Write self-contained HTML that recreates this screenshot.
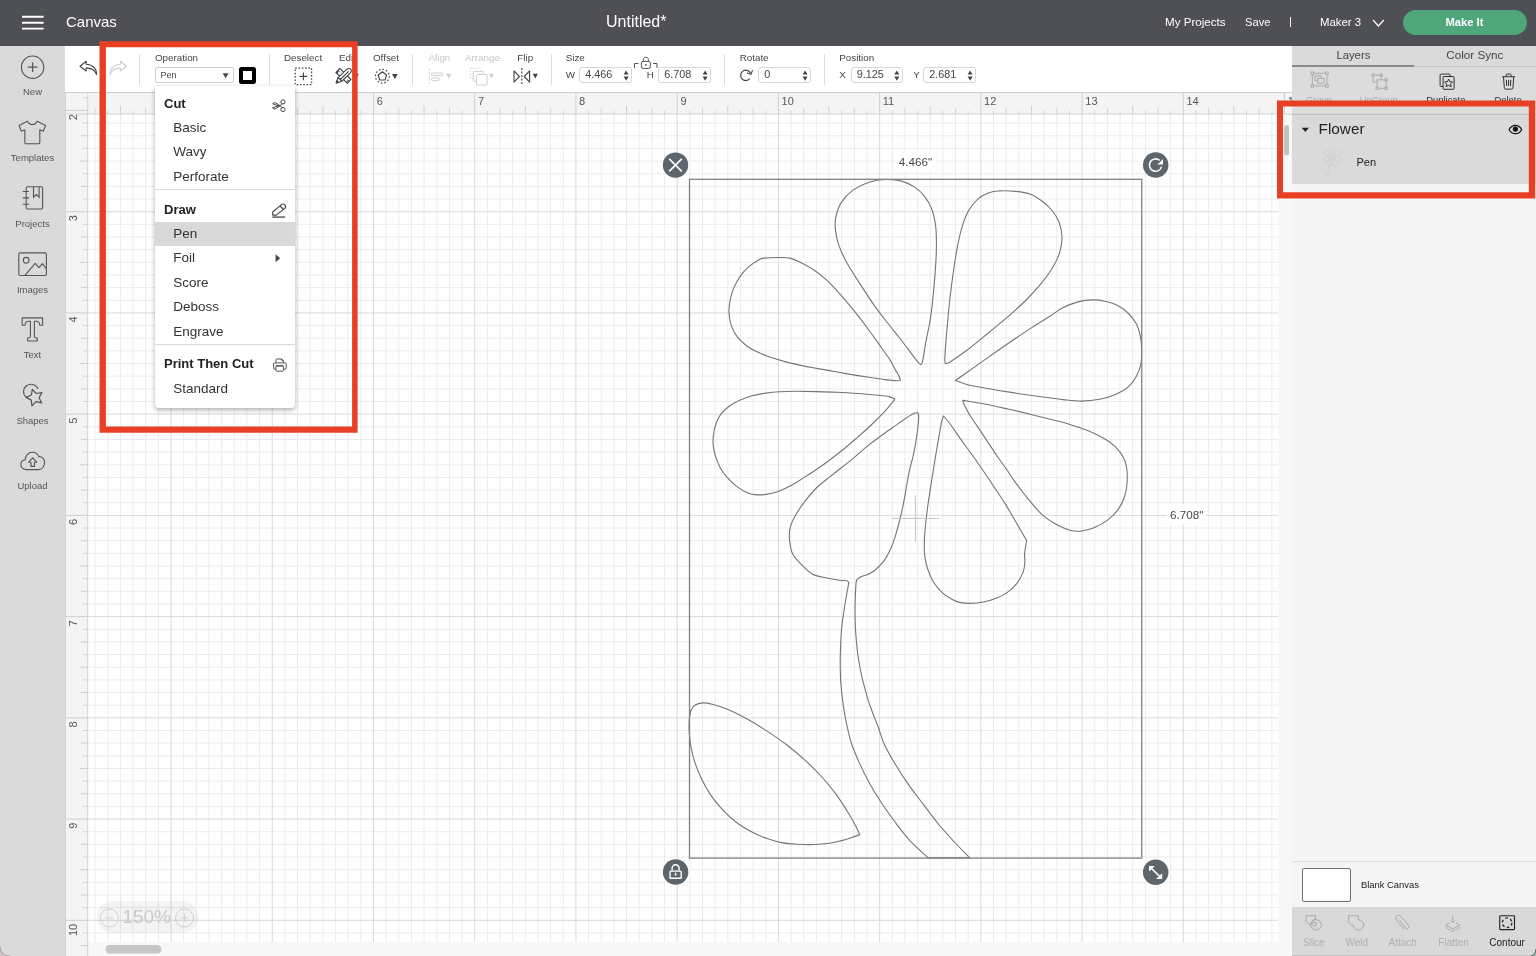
<!DOCTYPE html>
<html><head><meta charset="utf-8"><title>Canvas</title>
<style>
*{box-sizing:border-box;margin:0;padding:0}
html,body{width:1536px;height:956px;overflow:hidden;background:#fff;position:relative;font-family:"Liberation Sans",sans-serif;color:#333}
#topbar{position:absolute;left:0;top:0;width:1536px;height:45.7px;background:#4f5055;color:#fff;z-index:7}
#sidebar{position:absolute;left:0;top:45px;width:65.3px;height:911px;background:#dadada;z-index:5}
#toolbar{position:absolute;left:65px;top:45px;width:1228px;height:48px;background:#fff;border-bottom:1px solid #cdcdcd;z-index:4}
#cv{position:absolute;left:0;top:0;width:1536px;height:956px;z-index:1}
#rpanel{position:absolute;left:1292px;top:45px;width:244px;height:911px;background:#f5f5f5;z-index:5}
.t{position:absolute;white-space:nowrap;line-height:1}
.sb-l{position:absolute;left:0;width:65px;text-align:center;font-size:9.5px;color:#555;line-height:10px}
.ic{position:absolute;overflow:visible}
.tl{position:absolute;font-size:9.8px;color:#444;line-height:10px;white-space:nowrap}
.tl.dis{color:#c6c6c6}
.sep{position:absolute;top:9px;width:1px;height:31px;background:#dedede}
.inp{position:absolute;top:22.4px;height:16px;border:1px solid #d6d6d6;border-radius:3px;background:#fff;font-size:10.8px;color:#444;line-height:13.6px;padding-left:5px}
.spin{position:absolute;width:6px;height:11px;overflow:visible}
#menu{position:absolute;left:154.5px;top:85.5px;width:140.5px;height:322.5px;background:#fff;border-radius:0 0 4px 4px;box-shadow:0 2px 5px rgba(0,0,0,.32);z-index:6}
.mi{position:absolute;left:18.8px;font-size:13.5px;color:#333;line-height:14px;white-space:nowrap}
.mh{position:absolute;left:9.5px;font-size:13px;font-weight:bold;color:#222;line-height:14px;white-space:nowrap}
.md{position:absolute;left:0;width:100%;height:1px;background:#d8d8d8}
.red{position:absolute;border:5.8px solid #e83f25;z-index:9}
body{will-change:transform}
</style></head><body>
<div id="topbar">
<svg class="ic" style="left:22px;top:15px" width="22" height="14"><g transform="translate(0 0.6)"><path d="M0 1.2H21.6M0 7.1H21.6M0 13H21.6" stroke="#fff" stroke-width="1.9" fill="none"/></g></svg>
<div class="t" style="left:66px;top:14px;font-size:15px">Canvas</div>
<div class="t" style="left:606px;top:14.4px;font-size:16px">Untitled*</div>
<div class="t" style="left:1165px;top:16px;font-size:11.6px">My Projects</div>
<div class="t" style="left:1245px;top:16.8px;font-size:11.2px">Save</div>
<div class="t" style="left:1289px;top:16px;font-size:11.5px">|</div>
<div class="t" style="left:1320px;top:16.8px;font-size:11.4px">Maker 3</div>
<svg class="ic" style="left:1372px;top:19px" width="13" height="9"><path d="M1 1L6.4 7L11.8 1" stroke="#fff" stroke-width="1.2" fill="none"/></svg>
<div style="position:absolute;left:1403px;top:10px;width:123.5px;height:24.6px;border-radius:13px;background:#4fa67b"></div>
<div class="t" style="left:1445.5px;top:16.5px;font-size:11.2px;font-weight:bold">Make It</div>
</div>
<div id="sidebar">
<!-- New -->
<svg class="ic" style="left:20px;top:10px" width="25" height="25" fill="none" stroke="#555" stroke-width="1.1"><circle cx="12.6" cy="12.2" r="11.2"/><path d="M12.6 7.4V17M7.8 12.2H17.4" stroke-width="1.3"/></svg>
<div class="sb-l" style="top:42px">New</div>
<!-- Templates -->
<svg class="ic" style="left:18px;top:75px" width="29" height="25" fill="none" stroke="#555" stroke-width="1.1" stroke-linejoin="round"><path d="M9.5 1.3C10.5 3.6 12.3 4.6 14.3 4.6C16.3 4.6 18.1 3.6 19.1 1.3L27.6 5.5L25.2 11.2L21.8 9.8V22.3C21.8 23.2 21.2 23.7 20.4 23.7H8.2C7.4 23.7 6.8 23.2 6.8 22.3V9.8L3.4 11.2L1 5.5Z"/></svg>
<div class="sb-l" style="top:108px">Templates</div>
<!-- Projects -->
<svg class="ic" style="left:22px;top:141px" width="22" height="24" fill="none" stroke="#555" stroke-width="1.1"><rect x="4.2" y="0.8" width="16.4" height="22.2" rx="1.2"/><path d="M0.8 5.5H7M0.8 11.9H7M0.8 18.3H7"/><path d="M11.5 1V11.2L14.3 8.6L17.1 11.2V1"/></svg>
<div class="sb-l" style="top:173.5px">Projects</div>
<!-- Images -->
<svg class="ic" style="left:18px;top:207px" width="30" height="25" fill="none" stroke="#555" stroke-width="1.1" stroke-linejoin="round"><rect x="0.8" y="0.9" width="27.6" height="22.6" rx="1.4"/><circle cx="8.2" cy="8.3" r="2.9"/><path d="M7.2 23.2L17.2 11.3L21 15.6L24.4 11.6L28.2 16.6"/></svg>
<div class="sb-l" style="top:239.5px">Images</div>
<!-- Text -->
<svg class="ic" style="left:21px;top:272px" width="23" height="25" fill="none" stroke="#555" stroke-width="1.1" stroke-linejoin="round"><path d="M1.2 0.9H21.6V8.2H18.8C18.6 5.6 17.6 4.3 15 4.3H13.4V19.5C13.4 20.6 14 21 15.2 21H16.2V24H6.6V21H7.6C8.8 21 9.4 20.6 9.4 19.5V4.3H7.8C5.2 4.3 4.2 5.6 4 8.2H1.2Z"/></svg>
<div class="sb-l" style="top:304.5px">Text</div>
<!-- Shapes -->
<svg class="ic" style="left:22px;top:338px" width="22" height="24" fill="none" stroke="#555" stroke-width="1.1" stroke-linejoin="round"><path d="M16.0 5.9A7.5 7.5 0 1 0 4.4 14.6"/><path d="M10.3 6.3L14.2 10.5L19.9 9.6L17.1 14.7L19.7 19.9L14.0 18.7L9.9 22.8L9.3 17.1L4.1 14.4L9.4 12.0Z" fill="#dadada" stroke-width="1.2"/></svg>
<div class="sb-l" style="top:370.5px">Shapes</div>
<!-- Upload -->
<svg class="ic" style="left:20px;top:406px" width="26" height="20" fill="none" stroke="#555" stroke-width="1.1" stroke-linejoin="round"><path d="M6.4 18.6C3.2 18.6 0.9 16.4 0.9 13.6C0.9 11 2.8 9 5.2 8.7C5.4 4.5 8.4 1.2 12.4 1.2C15.4 1.2 17.8 2.9 18.8 5.6C22 5.4 24.6 8 24.6 11.6C24.6 15.4 22 18.6 18.8 18.6Z"/><path d="M11 15.4V11.2H8.6L12.7 6.8L16.8 11.2H14.4V15.4Z"/></svg>
<div class="sb-l" style="top:436px">Upload</div>
</div>
<div id="toolbar">
<!-- undo / redo -->
<svg class="ic" style="left:14px;top:15px" width="19" height="16" fill="none" stroke="#444" stroke-width="1.1" stroke-linejoin="round"><path d="M7.2 1.2L1 6.2L7.2 11V7.9C12 7.9 15.6 9.8 17.6 14.6C17.6 8.6 13.6 4.4 7.2 4.2Z"/></svg>
<svg class="ic" style="left:44px;top:15px" width="19" height="16" fill="none" stroke="#cfcfcf" stroke-width="1.1" stroke-linejoin="round"><path d="M11.4 1.2L17.6 6.2L11.4 11V7.9C6.6 7.9 3 9.8 1 14.6C1 8.6 5 4.4 11.4 4.2Z"/></svg>
<div class="sep" style="left:74.3px"></div>
<!-- operation -->
<div class="tl" style="left:90px;top:7.6px">Operation</div>
<div style="position:absolute;left:90px;top:22px;width:79px;height:16.2px;border:1px solid #cfcfcf;border-radius:2px;background:#fff"></div>
<div class="t" style="left:95.5px;top:25.2px;font-size:9px;color:#444;line-height:10px">Pen</div>
<svg class="ic" style="left:157px;top:28px" width="7" height="6"><g transform="translate(0.5 0)"><path d="M0.2 0.2H6L3.1 5.2Z" fill="#444"/></g></svg>
<div style="position:absolute;left:174px;top:21.7px;width:17px;height:17px;border:4px solid #000;border-radius:2.5px;background:#fff"></div>
<div class="sep" style="left:203.8px"></div>
<!-- deselect -->
<div class="tl" style="left:219px;top:7.6px">Deselect</div>
<svg class="ic" style="left:229px;top:22px" width="19" height="19" fill="none" stroke="#444"><rect x="1.2" y="1.2" width="16.4" height="16.4" stroke-width="1.2" stroke-dasharray="1.6 1.7"/><path d="M9.4 5.6V13.2M5.6 9.4H13.2" stroke-width="1.1"/></svg>
<!-- edit -->
<div class="tl" style="left:274px;top:7.6px">Edit</div>
<svg class="ic" style="left:270px;top:23px" width="17" height="17" fill="none" stroke="#444" stroke-width="1.1" stroke-linejoin="round"><path d="M4.8 0.4L0.9 4.5L12.4 15.4L16 11.5Z"/><path d="M3 2.6L4.6 4.2M1.9 3.7L3 4.8M12.6 11.6L14.2 13.2M11.6 12.8L12.7 13.9"/><path d="M11.9 1.2Q14.6 -0.4 15.9 1.4Q17.2 3 15.7 4.6L6.6 13.5L1.2 14.9L2.8 9.9Z" fill="#fff"/><path d="M13.7 3.3L4.8 12M2.8 9.9Q5.4 10.6 6.6 13.5"/><path d="M1.2 14.9L1.9 12.6L3.5 14.3Z" fill="#444"/></svg>
<svg class="ic" style="left:288px;top:28px" width="6" height="6"><g transform="translate(0.5 0.6)"><path d="M0.2 0.2H5.4L2.8 4.8Z" fill="#444"/></g></svg>
<!-- offset -->
<div class="tl" style="left:308px;top:7.6px">Offset</div>
<svg class="ic" style="left:309px;top:23px" width="16" height="16" fill="none" stroke="#444"><g transform="translate(0.6 0.4)"><circle cx="7.8" cy="7.8" r="6.9" stroke-width="1.2" stroke-dasharray="1.6 2"/><path d="M7.8 3.4L12 6.6L10.4 11.6H5.2L3.6 6.6Z" stroke-width="1.1" stroke-linejoin="round"/></g></svg>
<svg class="ic" style="left:326px;top:28px" width="7" height="6"><g transform="translate(0.8 0.8)"><path d="M0.2 0.2H6L3.1 5.2Z" fill="#444"/></g></svg>
<div class="sep" style="left:346.8px"></div>
<!-- align -->
<div class="tl dis" style="left:363.5px;top:7.6px">Align</div>
<svg class="ic" style="left:363px;top:23px" width="17" height="18" fill="none" stroke="#cfcfcf" stroke-width="1"><path d="M1.4 0.5V17" stroke-dasharray="2 1.4"/><rect x="3.4" y="5" width="11.4" height="2.6" rx="1.3"/><rect x="3.4" y="10" width="8" height="2.6" rx="1.3"/></svg>
<svg class="ic" style="left:381px;top:28px" width="6" height="6"><g transform="translate(0 0.6)"><path d="M0.2 0.2H5.4L2.8 4.8Z" fill="#cfcfcf"/></g></svg>
<!-- arrange -->
<div class="tl dis" style="left:400px;top:7.6px">Arrange</div>
<svg class="ic" style="left:404px;top:22px" width="19" height="19" fill="none" stroke="#cfcfcf" stroke-width="1"><g transform="translate(0.5 0.5)"><rect x="0.8" y="0.8" width="10" height="10" rx="1" stroke-dasharray="1.4 1.4"/><rect x="3.8" y="3.8" width="10" height="10" rx="1" fill="#fff"/><rect x="7" y="7" width="10.6" height="10.6" rx="1" fill="#fff"/></g></svg>
<svg class="ic" style="left:423px;top:28px" width="6" height="6"><g transform="translate(0.7 0.6)"><path d="M0.2 0.2H5.4L2.8 4.8Z" fill="#cfcfcf"/></g></svg>
<!-- flip -->
<div class="tl" style="left:452.3px;top:7.6px">Flip</div>
<svg class="ic" style="left:448px;top:22px" width="18" height="18" fill="none" stroke="#444" stroke-width="1.1" stroke-linejoin="round"><g transform="translate(0 0.5)"><path d="M8.8 0.4V17.6" stroke-dasharray="2 1.5"/><path d="M1 3.4L6.4 9L1 14.6Z"/><path d="M16.6 3.4L11.2 9L16.6 14.6Z"/></g></svg>
<svg class="ic" style="left:467px;top:28px" width="6" height="6"><g transform="translate(0.5 0.6)"><path d="M0.2 0.2H5.4L2.8 4.8Z" fill="#444"/></g></svg>
<div class="sep" style="left:486px"></div>
<!-- size -->
<div class="tl" style="left:500.7px;top:7.6px">Size</div>
<div class="tl" style="left:500.7px;top:24.6px;font-size:9.8px">W</div>
<div class="inp" style="left:514.3px;width:53px">4.466</div>
<svg class="spin" style="left:558px;top:25px"><g transform="translate(0.3 0.2)"><path d="M0.3 4.4H5.3L2.8 0.2ZM0.3 6.4H5.3L2.8 10.6Z" fill="#444"/></g></svg>
<svg class="ic" style="left:569px;top:11px" width="24" height="14" fill="none" stroke="#555" stroke-width="1"><path d="M0.5 12V7.5H4.5M23 12V7.5H19"/><rect x="7.4" y="5.4" width="9" height="7" rx="1.6" fill="#fff"/><path d="M9.4 5.4V3.6C9.4 0.4 14.4 0.4 14.4 3.6V5.4"/><circle cx="11.9" cy="8.9" r="0.9" fill="#555" stroke="none"/></svg>
<div class="tl" style="left:581.7px;top:24.6px;font-size:9.8px">H</div>
<div class="inp" style="left:593.3px;width:53px">6.708</div>
<svg class="spin" style="left:637px;top:25px"><g transform="translate(0.3 0.2)"><path d="M0.3 4.4H5.3L2.8 0.2ZM0.3 6.4H5.3L2.8 10.6Z" fill="#444"/></g></svg>
<div class="sep" style="left:659.3px"></div>
<!-- rotate -->
<div class="tl" style="left:674.7px;top:7.6px">Rotate</div>
<svg class="ic" style="left:674px;top:23px" width="15" height="14" fill="none" stroke="#444" stroke-width="1.2"><g transform="translate(0 0.5)"><path d="M10.8 10.2A5.2 5.2 0 1 1 11.4 4.4"/><path d="M8.2 4.8H13.4V0" stroke="none" fill="none"/><path d="M13.6 1.6L12 5.8L8 4.4" stroke-linejoin="round" stroke-width="1.1"/></g></svg>
<div class="inp" style="left:693.3px;width:53px">0</div>
<svg class="spin" style="left:737px;top:25px"><g transform="translate(0.3 0.2)"><path d="M0.3 4.4H5.3L2.8 0.2ZM0.3 6.4H5.3L2.8 10.6Z" fill="#444"/></g></svg>
<div class="sep" style="left:759.3px"></div>
<!-- position -->
<div class="tl" style="left:774.3px;top:7.6px">Position</div>
<div class="tl" style="left:774.3px;top:24.6px;font-size:9.8px">X</div>
<div class="inp" style="left:785.7px;width:52.5px">9.125</div>
<svg class="spin" style="left:829px;top:25px"><g transform="translate(0 0.2)"><path d="M0.3 4.4H5.3L2.8 0.2ZM0.3 6.4H5.3L2.8 10.6Z" fill="#444"/></g></svg>
<div class="tl" style="left:848.3px;top:24.6px;font-size:9.8px">Y</div>
<div class="inp" style="left:858.3px;width:53px">2.681</div>
<svg class="spin" style="left:902px;top:25px"><g transform="translate(0.3 0.2)"><path d="M0.3 4.4H5.3L2.8 0.2ZM0.3 6.4H5.3L2.8 10.6Z" fill="#444"/></g></svg>
</div>
<svg id="cv" width="1536" height="956" viewBox="0 0 1536 956" style="font-family:'Liberation Sans',sans-serif">
<rect x="65" y="93" width="1228" height="863" fill="#fff"/>
<path d="M95.10 114V942M107.75 114V942M120.41 114V942M133.06 114V942M145.71 114V942M158.37 114V942M183.67 114V942M196.33 114V942M208.98 114V942M221.64 114V942M234.29 114V942M246.94 114V942M259.60 114V942M284.90 114V942M297.56 114V942M310.21 114V942M322.87 114V942M335.52 114V942M348.17 114V942M360.83 114V942M386.13 114V942M398.79 114V942M411.44 114V942M424.10 114V942M436.75 114V942M449.40 114V942M462.06 114V942M487.36 114V942M500.02 114V942M512.67 114V942M525.33 114V942M537.98 114V942M550.63 114V942M563.29 114V942M588.59 114V942M601.25 114V942M613.90 114V942M626.56 114V942M639.21 114V942M651.86 114V942M664.52 114V942M689.82 114V942M702.48 114V942M715.13 114V942M727.79 114V942M740.44 114V942M753.09 114V942M765.75 114V942M791.05 114V942M803.71 114V942M816.36 114V942M829.01 114V942M841.67 114V942M854.32 114V942M866.98 114V942M892.28 114V942M904.94 114V942M917.59 114V942M930.25 114V942M942.90 114V942M955.55 114V942M968.21 114V942M993.51 114V942M1006.17 114V942M1018.82 114V942M1031.47 114V942M1044.13 114V942M1056.78 114V942M1069.44 114V942M1094.74 114V942M1107.40 114V942M1120.05 114V942M1132.70 114V942M1145.36 114V942M1158.01 114V942M1170.67 114V942M1195.97 114V942M1208.63 114V942M1221.28 114V942M1233.93 114V942M1246.59 114V942M1259.24 114V942M1271.90 114V942M88 123.11H1278.5M88 135.77H1278.5M88 148.42H1278.5M88 161.08H1278.5M88 173.73H1278.5M88 186.38H1278.5M88 199.04H1278.5M88 224.34H1278.5M88 237.00H1278.5M88 249.65H1278.5M88 262.31H1278.5M88 274.96H1278.5M88 287.61H1278.5M88 300.27H1278.5M88 325.57H1278.5M88 338.23H1278.5M88 350.88H1278.5M88 363.54H1278.5M88 376.19H1278.5M88 388.84H1278.5M88 401.50H1278.5M88 426.80H1278.5M88 439.46H1278.5M88 452.11H1278.5M88 464.76H1278.5M88 477.42H1278.5M88 490.07H1278.5M88 502.73H1278.5M88 528.03H1278.5M88 540.69H1278.5M88 553.34H1278.5M88 566.00H1278.5M88 578.65H1278.5M88 591.30H1278.5M88 603.96H1278.5M88 629.26H1278.5M88 641.92H1278.5M88 654.57H1278.5M88 667.23H1278.5M88 679.88H1278.5M88 692.53H1278.5M88 705.19H1278.5M88 730.49H1278.5M88 743.15H1278.5M88 755.80H1278.5M88 768.46H1278.5M88 781.11H1278.5M88 793.76H1278.5M88 806.42H1278.5M88 831.72H1278.5M88 844.38H1278.5M88 857.03H1278.5M88 869.69H1278.5M88 882.34H1278.5M88 894.99H1278.5M88 907.65H1278.5M88 932.95H1278.5" stroke="#ececec" stroke-width="1" fill="none"/>
<path d="M171.02 114V942M272.25 114V942M373.48 114V942M474.71 114V942M575.94 114V942M677.17 114V942M778.40 114V942M879.63 114V942M980.86 114V942M1082.09 114V942M1183.32 114V942M88 211.69H1278.5M88 312.92H1278.5M88 414.15H1278.5M88 515.38H1278.5M88 616.61H1278.5M88 717.84H1278.5M88 819.07H1278.5M88 920.30H1278.5" stroke="#dadada" stroke-width="1" fill="none"/>
<rect x="1278.5" y="114" width="14" height="842" fill="#f7f7f7"/>
<rect x="88" y="942" width="1205" height="14" fill="#f7f7f7"/>
<rect x="105.5" y="945" width="56" height="8.6" rx="4.3" fill="#c6c6c6"/>
<rect x="1284" y="125" width="5" height="30.5" rx="2.5" fill="#c2c2c2"/>
<rect x="65" y="93" width="1228" height="21" fill="#f4f4f4"/>
<rect x="65" y="93" width="23" height="863" fill="#f4f4f4"/>
<path d="M65.5 93V956M87.7 93V956M65 114H1293" stroke="#d4d4d4" stroke-width="1" fill="none"/>
<path d="M95.10 108.50V114M107.75 111.00V114M120.41 106.00V114M133.06 111.00V114M145.71 108.50V114M158.37 111.00V114M171.02 93.00V114M183.67 111.00V114M196.33 108.50V114M208.98 111.00V114M221.64 106.00V114M234.29 111.00V114M246.94 108.50V114M259.60 111.00V114M272.25 93.00V114M284.90 111.00V114M297.56 108.50V114M310.21 111.00V114M322.87 106.00V114M335.52 111.00V114M348.17 108.50V114M360.83 111.00V114M373.48 93.00V114M386.13 111.00V114M398.79 108.50V114M411.44 111.00V114M424.10 106.00V114M436.75 111.00V114M449.40 108.50V114M462.06 111.00V114M474.71 93.00V114M487.36 111.00V114M500.02 108.50V114M512.67 111.00V114M525.33 106.00V114M537.98 111.00V114M550.63 108.50V114M563.29 111.00V114M575.94 93.00V114M588.59 111.00V114M601.25 108.50V114M613.90 111.00V114M626.56 106.00V114M639.21 111.00V114M651.86 108.50V114M664.52 111.00V114M677.17 93.00V114M689.82 111.00V114M702.48 108.50V114M715.13 111.00V114M727.79 106.00V114M740.44 111.00V114M753.09 108.50V114M765.75 111.00V114M778.40 93.00V114M791.05 111.00V114M803.71 108.50V114M816.36 111.00V114M829.01 106.00V114M841.67 111.00V114M854.32 108.50V114M866.98 111.00V114M879.63 93.00V114M892.28 111.00V114M904.94 108.50V114M917.59 111.00V114M930.25 106.00V114M942.90 111.00V114M955.55 108.50V114M968.21 111.00V114M980.86 93.00V114M993.51 111.00V114M1006.17 108.50V114M1018.82 111.00V114M1031.47 106.00V114M1044.13 111.00V114M1056.78 108.50V114M1069.44 111.00V114M1082.09 93.00V114M1094.74 111.00V114M1107.40 108.50V114M1120.05 111.00V114M1132.70 106.00V114M1145.36 111.00V114M1158.01 108.50V114M1170.67 111.00V114M1183.32 93.00V114M1195.97 111.00V114M1208.63 108.50V114M1221.28 111.00V114M1233.93 106.00V114M1246.59 111.00V114M1259.24 108.50V114M1271.90 111.00V114M1284.55 93.00V114M83.20 97.81H87.7M65.70 110.46H87.7M83.20 123.11H87.7M81.20 135.77H87.7M83.20 148.42H87.7M79.70 161.08H87.7M83.20 173.73H87.7M81.20 186.38H87.7M83.20 199.04H87.7M65.70 211.69H87.7M83.20 224.34H87.7M81.20 237.00H87.7M83.20 249.65H87.7M79.70 262.31H87.7M83.20 274.96H87.7M81.20 287.61H87.7M83.20 300.27H87.7M65.70 312.92H87.7M83.20 325.57H87.7M81.20 338.23H87.7M83.20 350.88H87.7M79.70 363.54H87.7M83.20 376.19H87.7M81.20 388.84H87.7M83.20 401.50H87.7M65.70 414.15H87.7M83.20 426.80H87.7M81.20 439.46H87.7M83.20 452.11H87.7M79.70 464.76H87.7M83.20 477.42H87.7M81.20 490.07H87.7M83.20 502.73H87.7M65.70 515.38H87.7M83.20 528.03H87.7M81.20 540.69H87.7M83.20 553.34H87.7M79.70 566.00H87.7M83.20 578.65H87.7M81.20 591.30H87.7M83.20 603.96H87.7M65.70 616.61H87.7M83.20 629.26H87.7M81.20 641.92H87.7M83.20 654.57H87.7M79.70 667.23H87.7M83.20 679.88H87.7M81.20 692.53H87.7M83.20 705.19H87.7M65.70 717.84H87.7M83.20 730.49H87.7M81.20 743.15H87.7M83.20 755.80H87.7M79.70 768.46H87.7M83.20 781.11H87.7M81.20 793.76H87.7M83.20 806.42H87.7M65.70 819.07H87.7M83.20 831.72H87.7M81.20 844.38H87.7M83.20 857.03H87.7M79.70 869.69H87.7M83.20 882.34H87.7M81.20 894.99H87.7M83.20 907.65H87.7M65.70 920.30H87.7M83.20 932.95H87.7M81.20 945.61H87.7" stroke="#cfcfcf" stroke-width="1" fill="none"/>
<text x="174.2" y="105" font-size="11" fill="#555">4</text>
<text x="275.4" y="105" font-size="11" fill="#555">5</text>
<text x="376.7" y="105" font-size="11" fill="#555">6</text>
<text x="477.9" y="105" font-size="11" fill="#555">7</text>
<text x="579.1" y="105" font-size="11" fill="#555">8</text>
<text x="680.4" y="105" font-size="11" fill="#555">9</text>
<text x="781.6" y="105" font-size="11" fill="#555">10</text>
<text x="882.8" y="105" font-size="11" fill="#555">11</text>
<text x="984.1" y="105" font-size="11" fill="#555">12</text>
<text x="1085.3" y="105" font-size="11" fill="#555">13</text>
<text x="1186.5" y="105" font-size="11" fill="#555">14</text>
<text x="1287.8" y="105" font-size="11" fill="#555">15</text>
<text transform="translate(77 114.0) rotate(-90)" font-size="11" fill="#555" text-anchor="end">2</text>
<text transform="translate(77 215.2) rotate(-90)" font-size="11" fill="#555" text-anchor="end">3</text>
<text transform="translate(77 316.4) rotate(-90)" font-size="11" fill="#555" text-anchor="end">4</text>
<text transform="translate(77 417.7) rotate(-90)" font-size="11" fill="#555" text-anchor="end">5</text>
<text transform="translate(77 518.9) rotate(-90)" font-size="11" fill="#555" text-anchor="end">6</text>
<text transform="translate(77 620.1) rotate(-90)" font-size="11" fill="#555" text-anchor="end">7</text>
<text transform="translate(77 721.3) rotate(-90)" font-size="11" fill="#555" text-anchor="end">8</text>
<text transform="translate(77 822.6) rotate(-90)" font-size="11" fill="#555" text-anchor="end">9</text>
<text transform="translate(77 923.8) rotate(-90)" font-size="11" fill="#555" text-anchor="end">10</text>
<path d="M920.5 364.6C919.8 363.9 919.4 364.1 916.3 360.1C913.1 356.1 906.1 346.4 901.6 340.5C897.1 334.6 893.6 330.6 889.2 325.0C884.9 319.4 880.5 314.2 875.5 307.1C870.5 300.0 864.1 290.2 859.2 282.6C854.3 275.0 849.5 267.6 846.1 261.4C842.7 255.1 840.6 250.3 838.8 245.1C837.0 239.9 836.0 235.0 835.5 230.4C835.0 225.8 834.8 221.9 835.8 217.3C836.8 212.7 838.4 207.1 841.2 202.6C844.0 198.1 848.0 193.8 852.6 190.4C857.2 187.0 863.5 184.0 869.0 182.2C874.5 180.4 879.9 179.7 885.3 179.5C890.7 179.3 896.7 179.8 901.6 181.1C906.5 182.4 910.8 184.6 914.6 187.1C918.4 189.6 921.5 192.4 924.4 196.1C927.3 199.8 930.0 204.6 931.8 209.2C933.6 213.8 934.6 218.7 935.4 223.9C936.2 229.1 936.3 233.9 936.4 240.2C936.5 246.4 936.3 254.1 935.9 261.4C935.5 268.7 934.9 276.3 934.2 284.2C933.5 292.1 932.6 301.9 931.8 308.7C931.0 315.5 930.2 319.7 929.3 325.0C928.3 330.3 927.2 334.4 926.1 340.5C925.0 346.6 923.4 357.7 922.5 361.7C921.6 365.7 920.8 364.1 920.5 364.6ZM945.7 363.8C945.6 363.2 944.8 364.0 944.8 360.1C944.8 356.2 945.5 347.2 946.0 340.5C946.5 333.8 947.2 326.7 947.8 320.0C948.4 313.3 948.8 308.1 949.7 300.5C950.6 292.9 951.8 283.1 953.0 274.4C954.2 265.7 955.6 256.2 957.1 248.3C958.6 240.4 960.1 233.3 962.0 227.1C963.9 220.8 965.8 215.6 968.5 210.8C971.2 206.1 974.8 201.7 978.3 198.6C981.8 195.5 986.2 193.7 989.7 192.4C993.2 191.1 995.1 191.1 999.5 190.9C1003.9 190.7 1010.6 190.9 1015.8 191.4C1021.0 191.9 1026.2 192.6 1030.5 194.2C1034.8 195.8 1038.4 198.4 1041.9 201.0C1045.4 203.6 1048.8 206.5 1051.7 210.0C1054.6 213.5 1057.4 217.7 1059.1 222.2C1060.8 226.7 1061.9 232.0 1062.0 236.9C1062.1 241.8 1061.3 246.7 1059.9 251.6C1058.5 256.5 1056.4 261.1 1053.4 266.3C1050.4 271.5 1046.5 276.9 1041.9 282.6C1037.3 288.3 1031.3 294.8 1025.6 300.5C1019.9 306.2 1014.8 310.8 1007.7 316.9C1000.6 323.0 990.0 331.6 983.2 337.2C976.4 342.8 972.4 346.2 966.9 350.3C961.4 354.4 954.0 359.4 950.5 361.7C947.0 363.9 946.5 363.4 945.7 363.8ZM955.4 380.5C956.8 379.5 959.0 378.0 963.6 374.7C968.2 371.4 975.9 366.1 983.2 360.9C990.6 355.7 999.6 349.3 1007.7 343.7C1015.9 338.1 1025.0 332.0 1032.1 327.4C1039.2 322.8 1044.9 319.3 1050.1 316.0C1055.3 312.7 1058.4 310.0 1063.2 307.6C1068.0 305.2 1074.1 302.9 1078.9 301.6C1083.7 300.3 1087.7 300.0 1092.0 299.9C1096.3 299.8 1100.7 300.2 1105.0 301.2C1109.3 302.2 1114.2 303.6 1118.1 305.7C1122.0 307.8 1125.5 310.4 1128.6 313.5C1131.6 316.6 1134.5 320.3 1136.4 324.0C1138.4 327.7 1139.4 331.4 1140.3 335.8C1141.2 340.2 1141.5 345.3 1141.6 350.1C1141.7 354.9 1141.7 360.1 1140.8 364.5C1139.9 368.9 1138.4 372.6 1136.4 376.3C1134.4 380.0 1132.1 383.6 1128.6 386.7C1125.1 389.8 1120.3 392.5 1115.5 394.6C1110.7 396.7 1105.5 398.2 1099.8 399.3C1094.1 400.4 1087.6 401.1 1081.5 401.1C1075.4 401.2 1067.4 400.0 1063.2 399.6C1059.0 399.2 1061.8 399.4 1056.6 398.7C1051.4 398.0 1040.2 396.6 1032.1 395.5C1023.9 394.4 1015.9 393.2 1007.7 391.9C999.6 390.6 990.0 389.0 983.2 387.8C976.4 386.6 971.5 385.7 966.9 384.5C962.3 383.3 957.3 381.2 955.4 380.5ZM962.8 400.4C966.2 401.0 975.7 402.4 983.2 403.8C990.7 405.2 999.6 407.2 1007.7 409.0C1015.9 410.8 1023.9 412.7 1032.1 414.7C1040.2 416.7 1050.5 419.3 1056.6 420.8C1062.6 422.3 1063.0 422.2 1068.4 423.9C1073.9 425.6 1083.2 428.7 1089.3 431.2C1095.4 433.7 1100.6 436.4 1105.0 439.0C1109.4 441.6 1112.5 443.8 1115.5 446.9C1118.5 449.9 1121.4 453.8 1123.3 457.3C1125.2 460.8 1126.1 463.4 1126.7 467.8C1127.3 472.2 1127.3 478.7 1127.0 483.5C1126.7 488.3 1126.1 492.1 1124.6 496.5C1123.1 500.9 1120.9 505.7 1118.1 509.6C1115.3 513.5 1111.5 517.1 1107.6 520.1C1103.7 523.1 1098.9 525.6 1094.6 527.4C1090.2 529.2 1085.4 530.5 1081.5 531.0C1077.6 531.5 1074.9 531.5 1071.0 530.5C1067.1 529.5 1062.8 527.9 1058.0 525.3C1053.2 522.7 1047.4 519.3 1042.3 514.8C1037.2 510.3 1032.2 503.9 1027.5 498.1C1022.8 492.4 1017.2 484.8 1013.9 480.3C1010.6 475.8 1010.7 475.3 1007.7 471.0C1004.8 466.7 1000.3 460.7 996.2 454.7C992.1 448.7 987.6 441.6 983.2 435.1C978.9 428.6 973.4 420.8 970.1 415.5C966.8 410.2 964.8 405.8 963.6 403.3C962.4 400.8 962.9 400.9 962.8 400.4ZM943.5 416.0C944.7 417.4 947.1 419.9 950.5 424.5C953.9 429.1 959.2 437.2 963.6 443.3C968.0 449.4 972.0 454.5 976.7 461.2C981.4 467.9 987.1 476.5 991.9 483.7C996.7 490.9 1001.2 497.3 1005.4 504.1C1009.6 510.9 1013.8 518.3 1017.3 524.4C1020.8 530.5 1025.0 537.8 1026.6 540.5C1026.3 542.6 1024.9 549.7 1024.6 553.2C1024.3 556.7 1025.1 558.6 1024.9 561.7C1024.7 564.8 1024.5 568.4 1023.2 571.9C1021.9 575.4 1019.7 579.6 1017.3 582.9C1014.9 586.1 1012.2 588.9 1008.8 591.4C1005.4 593.9 1001.1 596.3 996.9 598.1C992.7 599.9 987.9 601.1 983.4 602.0C978.9 602.9 973.8 603.3 969.8 603.4C965.8 603.5 962.5 603.0 959.7 602.4C956.9 601.8 955.7 601.3 952.9 599.8C950.1 598.2 946.0 596.1 942.7 593.1C939.5 590.1 935.9 586.1 933.4 582.0C930.9 577.9 929.0 573.0 927.5 568.5C926.0 564.0 925.1 559.7 924.6 554.9C924.1 550.1 924.2 545.1 924.4 539.7C924.6 534.3 925.1 528.9 925.8 522.7C926.4 516.5 927.3 509.5 928.3 502.4C929.3 495.3 930.6 487.4 931.7 480.3C932.8 473.2 933.9 466.3 935.0 459.6C936.1 452.9 937.2 446.2 938.3 440.0C939.4 433.8 940.7 426.1 941.6 422.1C942.5 418.1 943.2 417.0 943.5 416.0ZM917.9 412.6C916.8 413.0 915.5 412.3 911.4 414.7C907.3 417.1 900.5 422.0 893.4 427.0C886.3 432.0 875.8 439.6 869.0 444.9C862.2 450.2 859.3 453.4 852.9 458.6C846.5 463.8 836.9 471.2 830.8 476.1C824.7 481.0 820.6 483.9 816.4 488.0C812.2 492.1 808.8 496.3 805.4 500.7C802.0 505.1 798.6 510.0 796.1 514.2C793.6 518.4 791.6 522.4 790.5 526.1C789.4 529.8 789.3 532.9 789.3 536.3C789.3 539.7 789.9 543.4 790.5 546.4C791.1 549.4 791.1 551.3 792.7 554.1C794.3 556.9 797.0 560.1 800.3 563.4C803.5 566.7 808.0 571.5 812.2 573.9C816.5 576.3 821.3 576.7 825.8 577.8C830.3 578.9 835.8 579.8 839.3 580.3C842.8 580.8 845.3 580.3 846.9 580.7C848.5 581.1 848.5 582.3 848.8 582.6C848.4 585.0 847.1 592.1 846.2 597.2C845.3 602.4 844.3 608.1 843.5 613.5C842.7 618.9 842.0 624.4 841.5 629.8C841.0 635.2 840.8 640.7 840.6 646.1C840.4 651.5 840.2 656.8 840.2 662.4C840.2 668.0 840.4 674.7 840.6 679.7C840.9 684.7 841.3 688.1 841.7 692.3C842.1 696.5 842.6 700.7 843.2 704.9C843.8 709.1 844.5 713.4 845.3 717.4C846.0 721.4 846.7 724.7 847.7 728.9C848.7 733.1 849.3 737.2 851.2 742.8C853.1 748.4 856.2 755.9 859.1 762.4C862.0 768.9 865.2 775.4 868.8 781.9C872.4 788.4 876.4 795.0 880.6 801.5C884.9 808.0 889.4 814.5 894.3 821.0C899.2 827.5 904.3 834.5 909.9 840.6C915.5 846.7 925.1 854.9 928.1 857.8L969.6 857.8C967.1 855.2 960.0 848.0 954.9 842.5C949.8 837.0 944.6 831.5 939.2 825.0C933.8 818.5 927.8 810.2 922.6 803.4C917.4 796.5 912.5 790.4 908.0 783.9C903.5 777.4 899.2 770.8 895.3 764.3C891.4 757.8 887.4 751.0 884.5 744.8C881.6 738.5 880.1 732.1 878.1 726.8C876.1 721.5 874.4 717.6 872.8 713.2C871.2 708.9 869.6 704.9 868.3 700.7C867.0 696.5 865.9 692.3 864.8 688.1C863.7 683.9 862.5 679.8 861.6 675.6C860.7 671.4 859.9 667.2 859.2 663.0C858.5 658.8 857.8 655.1 857.3 650.5C856.8 645.9 856.3 640.6 855.9 635.3C855.5 630.0 855.2 624.1 855.1 618.9C855.0 613.7 855.0 609.0 855.1 604.0C855.2 599.0 855.5 592.8 855.7 589.0C855.9 585.2 855.9 582.8 856.4 581.0C856.9 579.2 857.2 579.1 858.5 578.2C859.8 577.3 862.4 576.3 863.9 575.7C865.4 575.1 865.7 575.5 867.5 574.6C869.3 573.7 872.2 572.4 874.9 570.2C877.5 568.1 880.8 565.1 883.4 561.7C886.0 558.3 888.2 554.0 890.2 549.8C892.2 545.6 893.8 541.1 895.3 536.3C896.8 531.5 898.1 526.6 899.5 521.0C900.9 515.4 902.5 508.5 903.7 502.4C904.9 496.3 905.8 490.3 906.8 484.6C907.8 478.9 908.8 473.4 910.0 468.2C911.2 462.9 912.6 458.9 913.8 453.1C915.0 447.3 916.3 439.5 917.1 433.5C917.9 427.5 918.6 420.7 918.7 417.2C918.8 413.7 918.0 413.4 917.9 412.6ZM894.8 399.0C893.8 398.6 891.8 397.2 889.0 396.6C886.2 396.0 883.4 395.8 878.1 395.3C872.9 394.8 864.4 394.0 857.5 393.5C850.6 393.0 843.9 392.6 837.0 392.3C830.1 392.0 823.2 391.8 816.4 391.6C809.5 391.4 802.0 391.3 795.9 391.3C789.8 391.3 784.5 391.4 779.5 391.7C774.5 392.0 770.4 392.4 765.8 393.1C761.2 393.8 756.5 394.6 752.1 395.8C747.8 397.0 743.6 398.5 739.7 400.3C735.8 402.1 732.0 404.1 728.8 406.5C725.6 408.9 722.7 411.7 720.5 414.7C718.3 417.7 717.0 420.9 715.8 424.3C714.6 427.7 713.8 431.7 713.4 435.3C713.0 438.9 712.9 442.6 713.3 446.2C713.7 449.8 714.6 453.5 715.8 457.2C717.0 460.9 718.6 464.8 720.5 468.2C722.4 471.6 724.6 474.6 727.4 477.7C730.1 480.8 733.6 484.0 737.0 486.6C740.4 489.2 744.9 491.8 747.9 493.1C750.9 494.4 752.0 494.4 754.8 494.6C757.5 494.9 760.8 495.0 764.4 494.6C768.0 494.2 772.6 493.4 776.7 492.1C780.8 490.8 784.7 488.9 789.0 486.6C793.3 484.3 798.1 481.2 802.7 478.4C807.3 475.5 811.8 472.6 816.4 469.5C821.0 466.4 825.5 463.1 830.1 459.7C834.7 456.3 839.2 452.7 843.8 449.0C848.4 445.3 852.9 441.3 857.5 437.3C862.1 433.3 866.9 429.1 871.2 425.0C875.6 420.9 880.2 416.3 883.6 412.7C887.0 409.1 889.9 405.4 891.8 403.1C893.7 400.8 894.3 399.7 894.8 399.0ZM900.5 380.0C900.1 379.1 899.1 376.3 898.3 374.7C897.5 373.1 896.9 372.5 895.5 370.1C894.1 367.7 892.5 363.8 890.2 360.1C887.9 356.5 885.5 353.4 881.8 348.2C878.1 343.0 872.7 335.2 868.1 329.0C863.5 322.8 859.0 316.9 854.4 311.2C849.8 305.5 845.3 299.9 840.7 294.8C836.1 289.7 831.6 284.6 827.0 280.4C822.4 276.2 817.9 272.6 813.3 269.5C808.7 266.4 803.5 263.8 799.6 261.9C795.7 260.0 793.4 258.8 790.0 258.1C786.6 257.4 783.3 257.5 779.0 257.5C774.7 257.5 767.4 257.7 764.0 258.1C760.6 258.5 761.0 258.5 758.5 259.9C756.0 261.3 751.9 264.1 748.9 266.7C745.9 269.3 743.2 272.1 740.7 275.6C738.2 279.1 735.6 283.8 733.8 287.9C732.0 292.0 730.9 296.2 730.1 300.3C729.3 304.4 728.8 308.5 729.0 312.6C729.2 316.7 729.8 321.0 731.1 324.9C732.4 328.8 734.1 332.5 736.6 335.9C739.1 339.3 742.6 342.7 746.2 345.5C749.9 348.3 754.2 350.6 758.5 352.6C762.8 354.7 767.6 356.2 772.2 357.8C776.8 359.4 781.3 360.7 785.9 361.9C790.5 363.1 795.0 364.1 799.6 365.1C804.2 366.1 808.7 367.0 813.3 367.8C817.9 368.6 821.8 369.2 827.0 370.1C832.2 371.0 837.5 372.2 844.5 373.4C851.5 374.6 862.2 376.2 869.0 377.2C875.8 378.2 880.7 379.0 885.3 379.6C889.9 380.2 894.2 380.7 896.7 380.8C899.2 380.9 899.9 380.1 900.5 380.0ZM859.7 834.7C858.3 835.2 854.2 836.7 851.2 837.7C848.2 838.7 845.1 839.7 841.5 840.6C837.9 841.5 834.3 842.6 829.7 843.3C825.1 843.9 819.3 844.3 814.1 844.5C808.9 844.7 803.6 844.6 798.4 844.3C793.2 844.0 788.0 843.8 782.8 842.9C777.6 842.0 772.3 840.5 767.1 838.6C761.9 836.8 756.7 834.6 751.5 831.8C746.3 829.0 740.8 825.8 735.9 822.0C731.0 818.2 726.5 813.9 722.2 809.3C718.0 804.7 713.8 799.6 710.4 794.6C707.0 789.6 704.2 784.4 701.6 779.0C699.0 773.6 696.6 767.8 694.8 762.4C693.0 757.0 691.8 751.6 690.9 746.7C690.0 741.8 689.6 737.6 689.3 733.0C689.0 728.4 689.0 723.0 689.3 719.3C689.6 715.5 690.0 712.8 690.9 710.5C691.8 708.2 692.8 706.6 694.8 705.3C696.8 704.0 699.7 703.1 702.6 702.9C705.5 702.7 708.2 703.2 712.4 704.3C716.6 705.4 722.1 707.1 728.0 709.6C733.9 712.1 741.1 715.7 747.6 719.3C754.1 722.9 760.6 726.9 767.1 731.1C773.6 735.4 780.2 739.8 786.7 744.8C793.2 749.8 800.4 756.0 806.3 761.4C812.2 766.8 817.0 771.6 821.9 777.0C826.8 782.4 831.4 788.0 835.6 793.7C839.8 799.4 844.0 806.1 847.3 811.3C850.6 816.5 853.1 821.1 855.2 825.0C857.3 828.9 859.0 833.1 859.7 834.7Z" fill="none" stroke="#747474" stroke-width="1.1" stroke-linejoin="round"/>
<rect x="689.5" y="179.3" width="452.25" height="678.8" fill="none" stroke="#808080" stroke-width="1.3"/>
<path d="M892 518.4H939M915.4 495.3V542" stroke="#c4c4c4" stroke-width="1" fill="none"/>
<rect x="895.4" y="150.9" width="40.3" height="19.8" fill="#fff"/><text x="898.8" y="165.8" font-size="11.7" fill="#484848">4.466&quot;</text>
<rect x="1166.7" y="503.9" width="39.2" height="20.6" fill="#fff"/><text x="1169.9" y="518.8" font-size="11.7" fill="#484848">6.708&quot;</text>
<circle cx="675.5" cy="165.1" r="12.7" fill="#5d656d"/><path d="M669.2 158.8L681.8 171.4M681.8 158.8L669.2 171.4" stroke="#fff" stroke-width="1.7" fill="none"/>
<circle cx="1155.7" cy="165" r="12.75" fill="#5d656d"/><path d="M1159.6 160.3A6.2 6.2 0 1 0 1161.6 166.6" stroke="#fff" stroke-width="1.6" fill="none"/><path d="M1163 159.1V164.4H1157.5Z" fill="#fff"/>
<circle cx="675.6" cy="872.1" r="12.75" fill="#5d656d"/><rect x="670" y="871.1" width="11.2" height="7.1" rx="0.8" fill="none" stroke="#fff" stroke-width="1.4"/><path d="M672.1 870.6V868.3A3.5 3.5 0 0 1 679.1 868.3V870.6" stroke="#fff" stroke-width="1.4" fill="none"/><ellipse cx="675.6" cy="874.2" rx="0.8" ry="1.6" fill="#fff"/>
<circle cx="1155.7" cy="872.3" r="12.75" fill="#5d656d"/><path d="M1151.5 868.5L1159.8 876.5" stroke="#fff" stroke-width="1.7" fill="none"/><path d="M1149 866H1154.9L1149 871.6ZM1162.2 878.9V873.3L1156 878.9Z" fill="#fff"/>
<rect x="96.6" y="901" width="102" height="32" rx="16" fill="#000" fill-opacity="0.045"/>
<circle cx="109.3" cy="918" r="9" fill="none" stroke="#d0d0d0" stroke-width="1"/><path d="M105.3 918H113.3" stroke="#d0d0d0" stroke-width="1"/>
<circle cx="184.5" cy="918" r="9" fill="none" stroke="#d0d0d0" stroke-width="1"/><path d="M180.5 918H188.5M184.5 914V922" stroke="#d0d0d0" stroke-width="1"/>
<text x="146.7" y="923.4" font-size="19" fill="#c9c9c9" text-anchor="middle">150%</text>
</svg>
<div id="menu">
<div class="mh" style="top:11.5px">Cut</div>
<svg class="ic" style="left:117px;top:13px" width="15" height="14" fill="none" stroke="#444" stroke-width="1" stroke-linejoin="round"><circle cx="10.9" cy="2.9" r="2.1"/><circle cx="10.9" cy="10.5" r="2.1"/><path d="M0.6 4.7L2.8 3.5L8.6 7.1L9.7 8.8M0.6 4.7L3.2 5.7L7.6 7.2"/><path d="M0.6 8.9L2.8 10.1L8.6 6.5L9.7 4.8M0.6 8.9L3.2 7.9L7.6 6.4"/></svg>
<div class="mi" style="top:35.7px">Basic</div>
<div class="mi" style="top:59.9px">Wavy</div>
<div class="mi" style="top:84.3px">Perforate</div>
<div class="md" style="top:103.5px"></div>
<div class="mh" style="top:117.2px">Draw</div>
<svg class="ic" style="left:117px;top:117px" width="15" height="15" fill="none" stroke="#444" stroke-width="1.1" stroke-linejoin="round"><g transform="translate(0 0.5)"><path d="M9.2 1.4A2.5 2.5 0 0 1 12.8 4.9L4.3 11.6H0.7V8.5Z"/><path d="M8.1 2.5L11.5 6"/><path d="M0.4 13.6H13.1" stroke-width="1.3"/></g></svg>
<div style="position:absolute;left:0;top:136.7px;width:100%;height:24.2px;background:#d9d9d9"></div>
<div class="mi" style="top:141.5px">Pen</div>
<div class="mi" style="top:165.9px">Foil</div>
<svg class="ic" style="left:120px;top:168px" width="6" height="9"><g transform="translate(0.3 0)"><path d="M0.3 0.3V8.3L4.8 4.3Z" fill="#444"/></g></svg>
<div class="mi" style="top:190.2px">Score</div>
<div class="mi" style="top:214.4px">Deboss</div>
<div class="mi" style="top:239.0px">Engrave</div>
<div class="md" style="top:258.3px"></div>
<div class="mh" style="top:271.9px">Print Then Cut</div>
<svg class="ic" style="left:118px;top:272px" width="15" height="14" fill="none" stroke="#555" stroke-width="1" stroke-linejoin="round"><g transform="translate(0 0.5)"><path d="M2.9 4.3V1.3C2.9 0.8 3.2 0.5 3.7 0.5H8.2L10.5 2.8V4.3"/><path d="M8.2 0.6L10.4 2.8" stroke-width="1.4"/><rect x="0.6" y="4.4" width="12.6" height="6.3" rx="1"/><rect x="2.9" y="7.3" width="7.6" height="5.4" rx="0.9" fill="#fff"/><path d="M2.9 7.3H10.5" stroke-width="1.3"/></g></svg>
<div class="mi" style="top:296.2px">Standard</div>
</div>
<div id="rpanel">
<div style="position:absolute;left:0;top:0;width:244px;height:22px;background:#dadada"></div>
<div style="position:absolute;left:0;top:20.8px;width:244px;height:1.2px;background:#c4c4c4"></div>
<div style="position:absolute;left:0;top:20.2px;width:122px;height:1.8px;background:#8a8a8a"></div>
<div class="t" style="left:44.4px;top:4.5px;font-size:11.3px;color:#444;line-height:11px">Layers</div>
<div class="t" style="left:154.3px;top:3.8px;font-size:11.7px;color:#444;line-height:11px">Color Sync</div>
<div style="position:absolute;left:0;top:22px;width:244px;height:47.5px;background:#dcdcdc;border-bottom:1px solid #bfbfbf"></div>
<!-- group -->
<svg class="ic" style="left:18px;top:26px" width="19" height="17" fill="none" stroke="#aaa" stroke-width="1"><g transform="translate(0.5 0.5)"><rect x="1.8" y="1.8" width="14.6" height="12.6"/><rect x="0.5" y="0.5" width="2.6" height="2.6" fill="#dcdcdc"/><rect x="15.1" y="0.5" width="2.6" height="2.6" fill="#dcdcdc"/><rect x="0.5" y="13.1" width="2.6" height="2.6" fill="#dcdcdc"/><rect x="15.1" y="13.1" width="2.6" height="2.6" fill="#dcdcdc"/><rect x="4.6" y="4.4" width="6.2" height="4.8"/><rect x="7.2" y="6.8" width="6.2" height="4.8" fill="#dcdcdc"/></g></svg>
<div class="t" style="left:14px;top:50.3px;font-size:9.4px;color:#aaa;line-height:10px">Group</div>
<!-- ungroup -->
<svg class="ic" style="left:79px;top:28px" width="17" height="17" fill="none" stroke="#aaa" stroke-width="1"><g transform="translate(0.5 0.5)"><rect x="1.6" y="1.6" width="8" height="7"/><rect x="5.6" y="6.4" width="9" height="8.4" fill="#dcdcdc"/><rect x="0.5" y="0.5" width="2.2" height="2.2" fill="#dcdcdc"/><rect x="8.5" y="0.5" width="2.2" height="2.2" fill="#dcdcdc"/><rect x="4.5" y="13.7" width="2.2" height="2.2" fill="#dcdcdc"/><rect x="13.5" y="13.7" width="2.2" height="2.2" fill="#dcdcdc"/><rect x="13.5" y="5.3" width="2.2" height="2.2" fill="#dcdcdc"/></g></svg>
<div class="t" style="left:67.8px;top:50.3px;font-size:9.4px;color:#aaa;line-height:10px">UnGroup</div>
<!-- duplicate -->
<svg class="ic" style="left:147px;top:28px" width="16" height="17" fill="none" stroke="#333" stroke-width="1" stroke-linejoin="round"><g transform="translate(0.5 0.5)"><rect x="0.6" y="0.6" width="10" height="12.4" rx="0.8"/><rect x="3.6" y="3" width="11" height="12.8" rx="0.8" fill="#dcdcdc"/><path d="M9.1 5.6L10.3 8.2L13.1 8.5L11 10.4L11.6 13.2L9.1 11.8L6.6 13.2L7.2 10.4L5.1 8.5L7.9 8.2Z"/></g></svg>
<div class="t" style="left:134.3px;top:50.3px;font-size:9.4px;color:#333;line-height:10px">Duplicate</div>
<!-- delete -->
<svg class="ic" style="left:209px;top:28px" width="15" height="17" fill="none" stroke="#333" stroke-width="1" stroke-linejoin="round"><g transform="translate(0.5 0.5)"><path d="M0.6 3.2H13.6M4.6 3V1.4C4.6 0.9 4.9 0.6 5.4 0.6H8.8C9.3 0.6 9.6 0.9 9.6 1.4V3"/><path d="M2 3.4L2.8 14.4C2.9 15.2 3.4 15.6 4.2 15.6H10C10.8 15.6 11.3 15.2 11.4 14.4L12.2 3.4"/><path d="M4.9 6.4L5.2 12.4M7.1 6.4V12.4M9.3 6.4L9 12.4"/></g></svg>
<div class="t" style="left:202.5px;top:50.3px;font-size:9.4px;color:#333;line-height:10px">Delete</div>
<!-- layer -->
<div style="position:absolute;left:0;top:69.7px;width:244px;height:69.5px;background:#dadada"></div>
<svg class="ic" style="left:9px;top:82px" width="8" height="5"><g transform="translate(0.5 0.5)"><path d="M0.2 0.3H7.4L3.8 4.4Z" fill="#222"/></g></svg>
<div class="t" style="left:26.6px;top:76px;font-size:15.3px;color:#222;line-height:16px">Flower</div>
<svg class="ic" style="left:216px;top:79px" width="14" height="10" fill="none" stroke="#111" stroke-width="1.2"><g transform="translate(0.5 0.5)"><path d="M0.6 5C3.4 -0.6 10.4 -0.6 13.2 5C10.4 10.6 3.4 10.6 0.6 5Z"/><circle cx="6.9" cy="4.6" r="2.6" fill="#111" stroke="none"/></g></svg>
<svg class="ic" style="left:30px;top:102px" width="21" height="30" fill="none" stroke="#cfcfcf" stroke-width="0.8"><g transform="translate(10.5 10.5)"><ellipse cx="0" cy="-5.5" rx="2.2" ry="4.2"/><ellipse cx="0" cy="-5.5" rx="2.2" ry="4.2" transform="rotate(51)"/><ellipse cx="0" cy="-5.5" rx="2.2" ry="4.2" transform="rotate(103)"/><ellipse cx="0" cy="-5.5" rx="2.2" ry="4.2" transform="rotate(154)"/><ellipse cx="0" cy="-5.5" rx="2.2" ry="4.2" transform="rotate(206)"/><ellipse cx="0" cy="-5.5" rx="2.2" ry="4.2" transform="rotate(257)"/><ellipse cx="0" cy="-5.5" rx="2.2" ry="4.2" transform="rotate(309)"/></g><path d="M7 18C6 23 8 27 11 29.5M0.5 22.5C4 23 6.5 26 7.5 28.5C4 28.5 1 26 0.5 22.5Z"/></svg>
<div class="t" style="left:64.5px;top:111.5px;font-size:11px;color:#222;line-height:11px">Pen</div>
<!-- bottom -->
<div style="position:absolute;left:0;top:816px;width:244px;height:1px;background:#dedede"></div>
<div style="position:absolute;left:9.8px;top:823px;width:49.5px;height:33.6px;background:#fff;border:1px solid #6f6f6f;border-radius:2px"></div>
<div class="t" style="left:69px;top:834.5px;font-size:9.4px;color:#222;line-height:10px">Blank Canvas</div>
<div style="position:absolute;left:0;top:862.3px;width:244px;height:49px;background:#d9d9d9"></div>
<!-- slice -->
<svg class="ic" style="left:13px;top:870px" width="17" height="16" fill="none" stroke="#aaa" stroke-width="1" stroke-linejoin="round"><g transform="translate(0.5 0.1)"><path d="M0.6 0.6H10V4.2C7.4 4.6 5.6 6.6 5.6 9.2H3.4L0.6 6.4Z"/><circle cx="10.6" cy="9.8" r="5.2"/><path d="M7.4 7.4H10.8V10.2C10.2 10.8 9.2 11.2 8.2 11.2C7.8 10.6 7.4 9.4 7.4 7.4Z"/></g></svg>
<div class="t" style="left:11px;top:892.7px;font-size:10px;color:#b0b0b0;line-height:10px">Slice</div>
<!-- weld -->
<svg class="ic" style="left:56px;top:870px" width="17" height="16" fill="none" stroke="#aaa" stroke-width="1" stroke-linejoin="round"><g transform="translate(0 0.1)"><path d="M0.6 0.6H10.2V4.6C13.2 4.6 15.6 6.8 15.6 9.8C15.6 12.8 13.2 15 10.4 15C7.6 15 5.4 12.8 5.2 10H3.4L0.6 7.2Z"/></g></svg>
<div class="t" style="left:53.5px;top:892.7px;font-size:10px;color:#b0b0b0;line-height:10px">Weld</div>
<!-- attach -->
<svg class="ic" style="left:103px;top:869px" width="15" height="17" fill="none" stroke="#aaa" stroke-width="1" stroke-linecap="round"><g transform="translate(0 0.8)"><path d="M4.4 5.2L10.4 13C11.2 14 12.6 14.2 13.4 13.4C14.2 12.6 14.2 11.4 13.4 10.4L6 1.6C4.8 0.2 2.8 0.2 1.6 1.2C0.4 2.2 0.4 4 1.4 5.2L8.6 14"/><path d="M5.6 4.4L11.2 11.2" stroke-width="0"/></g></svg>
<div class="t" style="left:96.5px;top:892.7px;font-size:10px;color:#b0b0b0;line-height:10px">Attach</div>
<!-- flatten -->
<svg class="ic" style="left:153px;top:869px" width="16" height="17" fill="none" stroke="#aaa" stroke-width="1" stroke-linejoin="round"><g transform="translate(0 0.8)"><path d="M7.8 0.4V7.6M5.6 5.6L7.8 7.8L10 5.6"/><path d="M4.6 8L0.8 10.2L7.8 14.2L14.8 10.2L11 8"/><path d="M2.4 12L0.8 13L7.8 16.6L14.8 13L13.2 12" stroke-width="0.9"/></g></svg>
<div class="t" style="left:146.3px;top:892.7px;font-size:10px;color:#b0b0b0;line-height:10px">Flatten</div>
<!-- contour -->
<svg class="ic" style="left:207px;top:870px" width="17" height="16" fill="none" stroke="#222" stroke-width="1.1"><g transform="translate(0 0.1)"><rect x="0.7" y="0.7" width="14.8" height="13.8" rx="0.8"/><circle cx="8.1" cy="7.6" r="4.8" stroke-dasharray="2.7 2.33" stroke-width="1.3"/></g></svg>
<div class="t" style="left:197.3px;top:892.7px;font-size:10px;color:#222;line-height:10px">Contour</div>
</div>
<div style="position:absolute;left:1292px;top:955px;width:244px;height:1px;background:#c2c2c2;z-index:6"></div>
<svg style="position:absolute;left:0;top:946px;z-index:8" width="10" height="10"><path d="M0 0C0 6 3.5 10 10 10H0Z" fill="#cdc2c2"/><path d="M0 0C0 6 3.5 10 10 10" fill="none" stroke="#a9a0a0" stroke-width="1"/></svg>
<svg style="position:absolute;left:1531px;top:949px;z-index:8" width="5" height="7"><path d="M5 0C4.5 4 3 6 0 7H5Z" fill="#9fb5ad"/><path d="M5 0C4.5 4 3 6 0 7" fill="none" stroke="#555" stroke-width="1"/></svg>
<svg style="position:absolute;left:0;top:0;z-index:9;pointer-events:none" width="1536" height="956" fill="#e83f25"><path fill-rule="evenodd" d="M99.5 41.3H357.6V432.8H99.5ZM105.9 47.3H352.1V426.5H105.9Z"/><path fill-rule="evenodd" d="M1277.0 100.4H1535.2V198.4H1277.0ZM1283.0 106.5H1528.8V192.3H1283.0Z"/></svg>
</body></html>
